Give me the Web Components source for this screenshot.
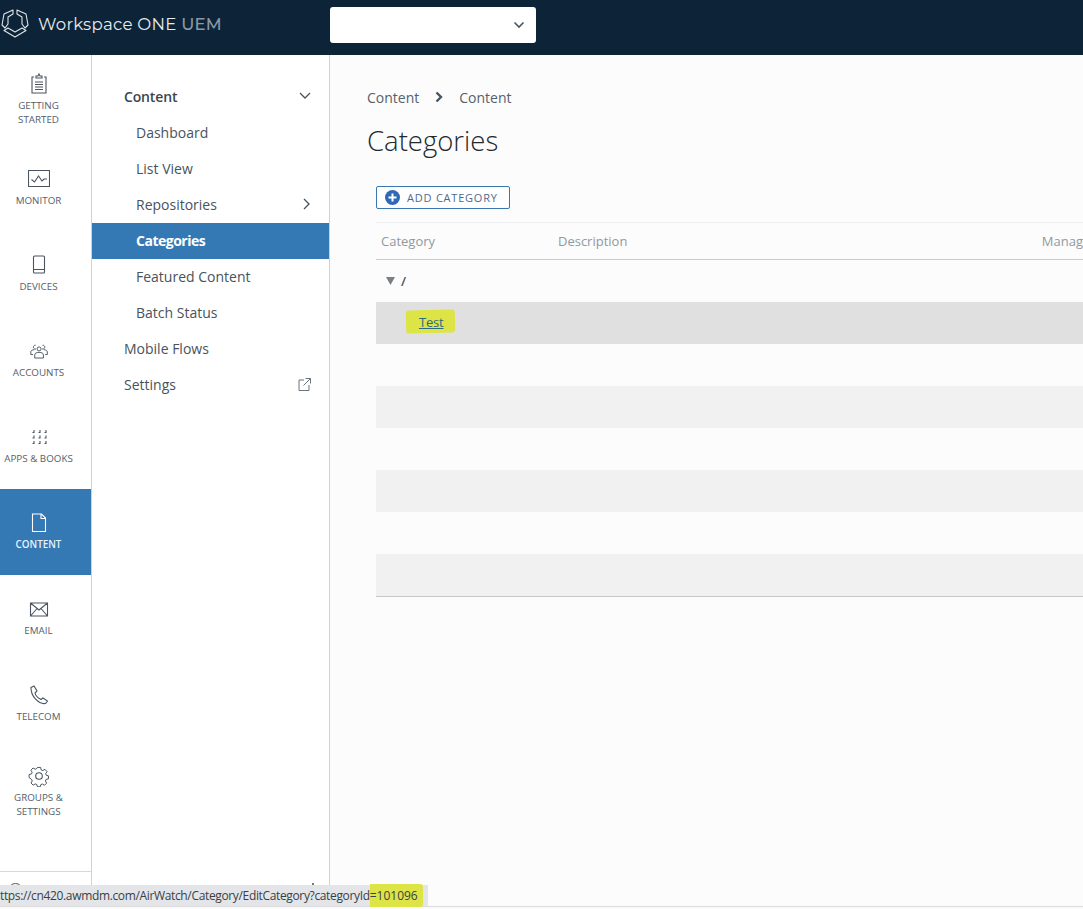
<!DOCTYPE html>
<html>
<head>
<meta charset="utf-8">
<title>Categories</title>
<style>
  html,body{margin:0;height:100%;overflow:hidden;background:#fff}
  body{font-family:"Open Sans",sans-serif}
  uem-app{height:909px}
</style>
</head>
<body>
<uem-app>
  <uem-header slot="header"></uem-header>
  <uem-rail slot="rail"></uem-rail>
  <uem-subnav slot="subnav"></uem-subnav>
  <uem-categories slot="main"></uem-categories>
  <uem-status slot="status"></uem-status>
</uem-app>

<script>
class UemApp extends HTMLElement {
  constructor() {
    super();
    this.attachShadow({ mode: "open" });
  }
  connectedCallback() {
    this.shadowRoot.innerHTML = `
      <style>
        :host{display:grid;grid-template-columns:92px 238px 1fr;grid-template-rows:55px 1fr;position:relative;overflow:hidden;width:1083px}
        ::slotted([slot=header]){grid-column:1 / 4}
        .edge{position:absolute;left:0;right:0;top:906px;height:3px;box-sizing:border-box;background:#fafafa;border-top:1px solid #dcdcdc}
      </style>
      <slot name="header"></slot>
      <slot name="rail"></slot>
      <slot name="subnav"></slot>
      <slot name="main"></slot>
      <div class="edge"></div>
      <slot name="status"></slot>
    `;
  }
}
customElements.define("uem-app", UemApp);

class UemHeader extends HTMLElement {
  constructor() {
    super();
    this.attachShadow({ mode: "open" });
  }
  connectedCallback() {
    this.shadowRoot.innerHTML = `
      <style>
        :host{display:flex;align-items:center;background:#0d2438;height:55px}
        .logo{margin-left:1px;width:28px;height:30px;flex:none;margin-top:-7px}
        .name{margin-left:9px;width:292px;margin-top:-8px;font-family:"Montserrat","Lato","Open Sans",sans-serif;font-size:16.600px;color:#e6ebef;white-space:nowrap;letter-spacing:.25px}
        .name b{font-weight:500;color:#8b9aa8}
        .pick{width:206px;height:36px;margin-top:-6px;background:#fff;border-radius:3px;display:flex;align-items:center;justify-content:flex-end;padding-right:11px;box-sizing:border-box}
      </style>
      <svg class="logo" viewBox="0 0 28 30" fill="none" stroke="#dfe5ea" stroke-width="1.100" stroke-linejoin="round">
        <path d="M12 1 3 5 1 16l3 3 3-4V8l5-3z"/>
        <path d="M16 1l9 4 2 11-3 3-3-4V8l-5-3z"/>
        <path d="M3 21.500 7 19l7 4 7-4 4 2.500L14 28z"/>
      </svg>
      <div class="name">Workspace ONE <b>UEM</b></div>
      <div class="pick">
        <svg width="12" height="8" viewBox="0 0 12 8" fill="none" stroke="#4a5563" stroke-width="1.600"><path d="M1.500 1.500 6 6l4.500-4.500"/></svg>
      </div>
    `;
  }
}
customElements.define("uem-header", UemHeader);

const appsMarks = [6, 12, 18].flatMap(x => [4, 9.5, 15].map(y => `M${x} ${y}v2.500h-1.500`)).join("");

const RAIL_ICONS = {
  started: `<path d="M6 4H4v16h14V4h-2M8 5V3h2l1-2 1 2h2v2zM7 9h8M7 11.500h8M7 14h8M7 16.500h8"/>`,
  monitor: `<path d="M.5 2.500h21v16H.5zM3.500 11.500l3 2.500 4-6 3.500 5 2-2h3"/>`,
  devices: `<path d="M6.500 2h9a1 1 0 0 1 1 1v15a1 1 0 0 1-1 1h-9a1 1 0 0 1-1-1V3a1 1 0 0 1 1-1zM5.500 15.500h11"/>`,
  accounts: `<g transform="translate(1.500 1.500) scale(.87)"><circle cx="11" cy="8.500" r="2.300"/><path d="M6 19v-3.500c0-2 2-3 5-3s5 1 5 3V19zM7.500 8.500a2.200 2.200 0 1 1-.500-4.200M14.500 8.500a2.200 2.200 0 1 0 .500-4.200M4 15H1.500v-3c0-1.500 1.500-2.500 4-2.500M18 15h2.500v-3c0-1.500-1.500-2.500-4-2.500"/></g>`,
  apps: `<path d="${appsMarks}"/>`,
  content: `<path d="M4.500 2h9l4 4v13.500h-13zM13 2v4.500h4.500"/>`,
  email: `<path d="M2.500 5h17v13h-17zM2.500 5l8.500 7 8.500-7M2.500 18l6.500-7.500M19.500 18 13 10.500"/>`,
  telecom: `<path d="M3 3.500 6 2l3 5-2 2c.5 2.500 3 5 6 6.500l2-1.500 4.500 3-2 2.500c-6.500 1-15-7-14.500-16.500z"/>`,
  groups: `<circle cx="11" cy="11" r="3.300"/><path d="M9.200 1.500h3.600l.6 2.700 1.800.8 2.400-1.400 2.300 2.500-1.500 2.300.7 1.800 2.400.6v3.400l-2.600.6-.8 1.800 1.400 2.300-2.400 2.400-2.300-1.400-1.800.7-.6 2.400H9.200l-.6-2.500-1.800-.7-2.300 1.400-2.400-2.400 1.400-2.300-.8-1.800L0 12.700V9.300l2.700-.6.700-1.800L2 4.600l2.400-2.500 2.400 1.400 1.800-.8z" transform="translate(1.100 1.100) scale(.9)"/>`
};

class UemRail extends HTMLElement {
  constructor() {
    super();
    this.attachShadow({ mode: "open" });
  }
  connectedCallback() {
    const items = [
      ["started", "GETTING<br>STARTED", 14],
      ["monitor", "MONITOR", 23],
      ["devices", "DEVICES", 23],
      ["accounts", "ACCOUNTS", 23],
      ["apps", "APPS &amp; BOOKS", 23],
      ["content", "CONTENT", 23, true],
      ["email", "EMAIL", 23],
      ["telecom", "TELECOM", 23],
      ["groups", "GROUPS &amp;<br>SETTINGS", 18]
    ];
    this.shadowRoot.innerHTML = `
      <style>
        :host{display:block;box-sizing:border-box;border-right:1px solid #cfd2d4;background:#fff;padding-top:4px;position:relative}
        .item{height:86px;box-sizing:border-box;padding-right:14px;display:flex;flex-direction:column;align-items:center;text-align:center;font-size:9.800px;line-height:14px;color:#56606a;white-space:nowrap}
        .item svg{width:22px;height:22px;flex:none;margin-bottom:4px}
        .item.on{background:#3478b4;color:#e6f3fb;font-weight:600}
        .foot{position:absolute;left:0;right:0;top:816px;height:30px;border-top:1px solid #d5d7d9}
        .foot i{position:absolute;left:8px;top:11px;width:13px;height:13px;border:1px solid #555;border-radius:50%}
      </style>
      ${items.map(([icon, label, top, on]) => `
        <div class="item ${on ? "on" : ""}" style="padding-top:${top}px">
          <svg viewBox="0 0 22 22" fill="none" stroke="${on ? "#fff" : "#4a5560"}" stroke-width="1.100">${RAIL_ICONS[icon]}</svg>
          <div>${label}</div>
        </div>`).join("")}
      <div class="foot"><i></i></div>
    `;
  }
}
customElements.define("uem-rail", UemRail);

class UemSubnav extends HTMLElement {
  constructor() {
    super();
    this.attachShadow({ mode: "open" });
  }
  connectedCallback() {
    this.shadowRoot.innerHTML = `
      <style>
        :host{display:block;box-sizing:border-box;border-right:1px solid #cfd2d4;background:#fff;padding-top:24px;font-size:14px;color:#48535c;position:relative}
        .row{height:36px;box-sizing:border-box;padding:0 18px 2px 44px;display:flex;align-items:center;justify-content:space-between}
        .top{padding-left:32px}
        .head{font-weight:600;color:#3b454e;letter-spacing:-.15px}
        .on{background:#3478b4;color:#fff;font-weight:700;letter-spacing:-.5px}
        .tick{position:absolute;left:220px;top:828px;width:2px;height:2px;background:#777}
      </style>
      <div class="row top head">Content
        <svg width="12" height="8" viewBox="0 0 12 8" fill="none" stroke="#48535c" stroke-width="1.300"><path d="M1 1l5 5 5-5"/></svg>
      </div>
      <div class="row">Dashboard</div>
      <div class="row">List View</div>
      <div class="row">Repositories
        <svg width="8" height="12" viewBox="0 0 8 12" fill="none" stroke="#48535c" stroke-width="1.300"><path d="M1 1l5 5-5 5"/></svg>
      </div>
      <div class="row on">Categories</div>
      <div class="row">Featured Content</div>
      <div class="row">Batch Status</div>
      <div class="row top">Mobile Flows</div>
      <div class="row top">Settings
        <svg width="13" height="13" viewBox="0 0 13 13" fill="none" stroke="#6a747c" stroke-width="1"><path d="M6 2H1v10.500h10V7M7.500.5h5v5M12.500.5 5.500 7.500"/></svg>
      </div>
      <div class="tick"></div>
    `;
  }
}
customElements.define("uem-subnav", UemSubnav);

class UemCategories extends HTMLElement {
  constructor() {
    super();
    this.attachShadow({ mode: "open" });
  }
  connectedCallback() {
    this.shadowRoot.innerHTML = `
      <style>
        :host{display:block;background:#fcfcfd;padding:30px 0 0 37px;overflow:hidden;color:#48535c;min-width:0}
        .crumbs{display:flex;align-items:center;height:24px;font-size:14px;color:#56616a}
        .crumbs svg{margin:0 15px 0 16px}
        h1{margin:12px 0 0;font-size:27.500px;font-weight:300;line-height:40px;color:#22282d}
        .add{margin:25px 0 0 9px;width:134px;height:23px;box-sizing:border-box;border:1px solid #3a78b0;border-radius:2px;background:#fff;display:flex;align-items:center;padding-left:8px;font-size:11px;letter-spacing:.78px;color:#4d6a8c;white-space:nowrap}
        .add svg{margin-right:7px;flex:none}
        .table{margin:13px 0 0 9px;width:707px}
        .th{height:38px;box-sizing:border-box;padding-bottom:1px;display:flex;align-items:center;border-top:1px solid #eceeef;border-bottom:1px solid #c9cccf;font-size:13px;color:#92989d;white-space:nowrap}
        .th span:nth-child(1){margin-left:5px;width:177px}
        .th span:nth-child(2){width:484px}
        .r{height:42px;box-sizing:border-box;display:flex;align-items:center}
        .g{background:#f1f1f1}
        .root{font-size:13px;font-weight:600;color:#48535c;padding-left:10px}
        .root svg{margin-right:6px}
        .sel{background:#e0e0e0;padding-bottom:2px}
        .test{margin-left:43px;position:relative;font-size:13px;letter-spacing:-.2px;color:#2d6a82;text-decoration:underline;z-index:0}
        .test::before{content:"";position:absolute;z-index:-1;left:-13px;right:-11px;top:-3px;bottom:-2px;background:#dde445;border-radius:3px;transform:rotate(-1.500deg)}
        .end{border-bottom:1px solid #c6c8ca;height:43px}
      </style>
      <div class="crumbs">Content
        <svg width="9" height="12" viewBox="0 0 9 12" fill="none" stroke="#4a5563" stroke-width="2.400"><path d="M1.500 1.500 6 6l-4.500 4.500"/></svg>
        Content</div>
      <h1>Categories</h1>
      <div class="add">
        <svg width="15" height="15" viewBox="0 0 15 15"><circle cx="7.500" cy="7.500" r="7.500" fill="#2f69b5"/><path d="M7.500 3.500v8M3.500 7.500h8" stroke="#fff" stroke-width="2"/></svg>
        ADD CATEGORY
      </div>
      <div class="table">
        <div class="th"><span>Category</span><span>Description</span><span>Manag</span></div>
        <div class="r root"><svg width="9" height="8" viewBox="0 0 9 8"><path d="M0 0h9L4.500 8z" fill="#7a7f84"/></svg>/</div>
        <div class="r sel"><span class="test">Test</span></div>
        <div class="r"></div>
        <div class="r g"></div>
        <div class="r"></div>
        <div class="r g"></div>
        <div class="r"></div>
        <div class="r g end"></div>
      </div>
    `;
  }
}
customElements.define("uem-categories", UemCategories);

class UemStatus extends HTMLElement {
  constructor() {
    super();
    this.attachShadow({ mode: "open" });
  }
  connectedCallback() {
    this.shadowRoot.innerHTML = `
      <style>
        :host{position:absolute;left:0;top:885px;width:428px;height:21px;background:#e3e5e8;display:flex;align-items:center;font-family:"Open Sans",sans-serif;font-size:12px;color:#3a3f44;white-space:nowrap}
        .u{letter-spacing:-.35px}
        mark{background:#dde445;color:inherit;display:inline-block;padding:3px 5px 3px 0;border-radius:0 3px 3px 0;letter-spacing:0}
      </style>
      <span class="u">ttps://cn420.awmdm.com/AirWatch/Category/EditCategory?categoryId<mark>=101096</mark></span>
    `;
  }
}
customElements.define("uem-status", UemStatus);
</script>
</body>
</html>
